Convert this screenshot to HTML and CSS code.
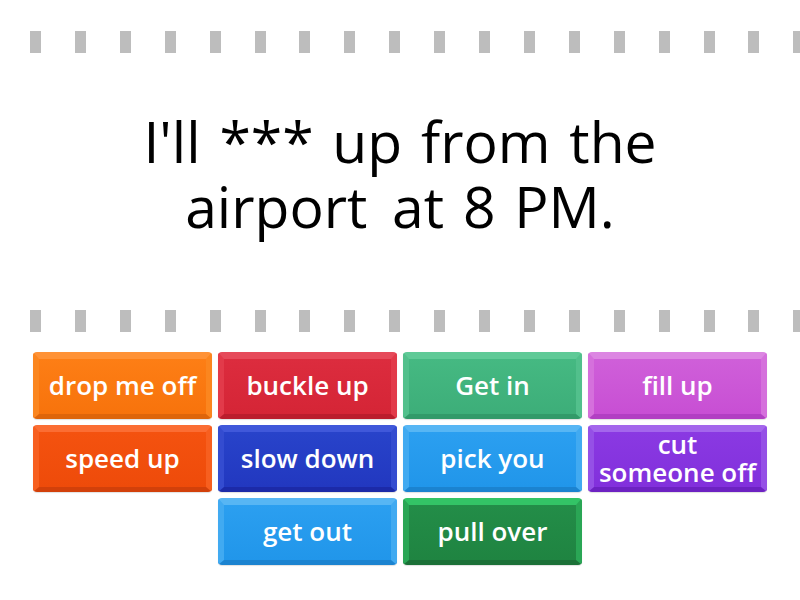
FILE: index.html
```html
<!DOCTYPE html>
<html lang="en">
<head>
    <meta charset="UTF-8">
    <meta name="viewport" content="width=device-width, initial-scale=1.0">
    <title>Find the match</title>
    <link rel="stylesheet" href="styles.css">
</head>
<body>
    <div class="dashes dashes-top"></div>

    <div class="question">
        <p>I'll *** up from the<br>airport<span class="gap"></span> at 8 PM.</p>
    </div>

    <div class="dashes"></div>

    <div class="answers">
        <button class="tile orange">drop me off</button>
        <button class="tile red">buckle up</button>
        <button class="tile green">Get in</button>
        <button class="tile pink">fill up</button>

        <button class="tile vermilion">speed up</button>
        <button class="tile navy">slow down</button>
        <button class="tile sky">pick you</button>
        <button class="tile violet">cut<br>someone off</button>

        <button class="tile sky skip">get out</button>
        <button class="tile forest">pull over</button>
    </div>
</body>
</html>
```

FILE: styles.css
```css
* {
    margin: 0;
    padding: 0;
    box-sizing: border-box;
}

body {
    font-family: 'Open Sans', 'Noto Sans', sans-serif;
    background: #fff;
    color: #000;
    width: 800px;
    height: 600px;
    overflow: hidden;
}

/* dotted separator rows */
.dashes {
    height: 22px;
    margin-left: 30px;
    background-image: repeating-linear-gradient(to right, #bdbdbd 0 11px, transparent 11px 44.9px);
    background-repeat: no-repeat;
}

.dashes-top {
    margin-top: 31px;
}

.question {
    height: 257px;
    padding-top: 56px;
    text-align: center;
}

.question p {
    font-size: 57px;
    line-height: 65px;
    word-spacing: 4px;
}

.question .gap {
    display: inline-block;
    width: 6px;
}

.answers {
    display: grid;
    grid-template-columns: repeat(4, 179px);
    grid-auto-rows: 67px;
    gap: 6px;
    padding: 20px 0 0 33px;
}

.answers .skip {
    grid-column: 2;
}

.tile {
    font-family: 'Open Sans', 'Noto Sans', sans-serif;
    font-size: 26px;
    font-weight: 600;
    line-height: 28px;
    color: #fff;
    border-style: solid;
    border-width: 7px 6px 5px 6px;
    border-radius: 4px;
    display: flex;
    align-items: center;
    justify-content: center;
    text-align: center;
    padding-bottom: 3px;
    box-shadow: 0 1px 1px rgba(0,0,0,0.12);
}

.orange {
    background: linear-gradient(#fd7e15, #f7730c);
    border-color: #ff9236 #fb861f #de650a #fb861f;
}

.red {
    background: linear-gradient(#dc2c3e, #d52536);
    border-color: #e64a5a #e23a4a #bb1d2d #e23a4a;
}

.green {
    background: linear-gradient(#45b982, #3dae79);
    border-color: #5fca97 #52c08c #329a69 #52c08c;
}

.pink {
    background: linear-gradient(#cf5fd9, #c84fd4);
    border-color: #dc86e2 #d570dc #b23fc3 #d570dc;
}

.vermilion {
    background: linear-gradient(#f4520f, #ee4b0a);
    border-color: #fb6d33 #f75f1f #d2400a #f75f1f;
}

.navy {
    background: linear-gradient(#2843ca, #2238c0);
    border-color: #4058da #344cd0 #1c2aa8 #344cd0;
}

.sky {
    background: linear-gradient(#2b9ff0, #2196ea);
    border-color: #57b6f4 #41aaf1 #1b83d0 #41aaf1;
}

.violet {
    background: linear-gradient(#8a39e2, #8230dc);
    border-color: #a466ec #9550e6 #6d22c2 #9550e6;
}

.forest {
    background: linear-gradient(#238d48, #1f8441);
    border-color: #33c466 #2aa655 #1b7037 #2aa655;
}
```
